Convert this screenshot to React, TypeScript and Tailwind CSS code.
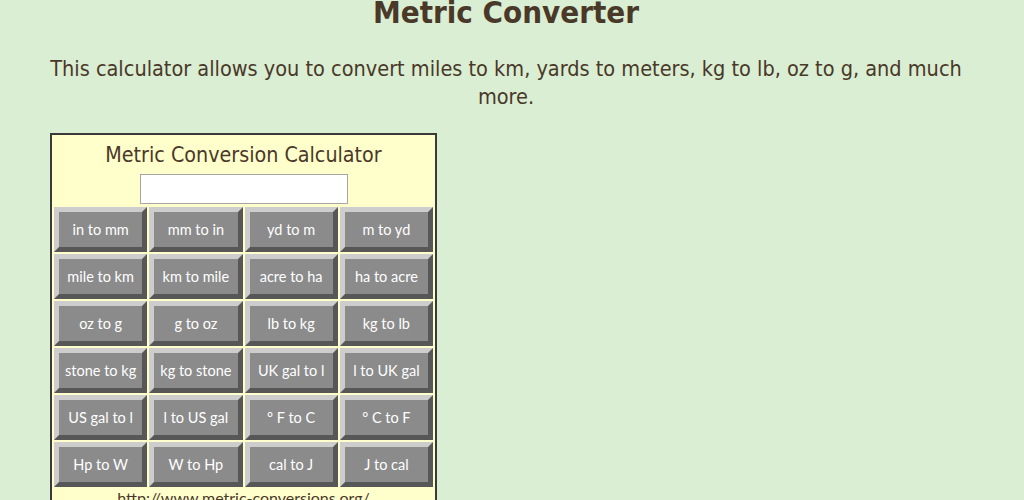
import React from "react";

const rows: string[][] = [
  ["in to mm", "mm to in", "yd to m", "m to yd"],
  ["mile to km", "km to mile", "acre to ha", "ha to acre"],
  ["oz to g", "g to oz", "lb to kg", "kg to lb"],
  ["stone to kg", "kg to stone", "UK gal to l", "l to UK gal"],
  ["US gal to l", "l to US gal", "° F to C", "° C to F"],
  ["Hp to W", "W to Hp", "cal to J", "J to cal"],
];

export default function App() {
  return (
    <div className="min-h-[500px] w-[1024px] overflow-hidden bg-[#d9eed3] text-[#4a3828] [font-family:'DejaVu_Sans',sans-serif] font-stretch-condensed">
      <div className="pr-[12px] mt-[-7px]">
        <h1 className="text-center text-[31px] leading-[38px] font-bold">Metric Converter</h1>
        <p className="mt-[24px] px-[40px] text-center text-[21.5px] leading-[28px]">
          This calculator allows you to convert miles to km, yards to meters, kg to lb, oz to g, and much more.
        </p>
      </div>
      <div className="ml-[50px] mt-[22px] w-[387px] border-2 border-[#3a3a3a] bg-[#ffffcc] pb-2">
        <div className="pt-[6px] text-center text-[21.3px] leading-[28px]">Metric Conversion Calculator</div>
        <div className="flex justify-center mt-[5px]">
          <input
            type="text"
            className="h-[30px] w-[208px] border border-[#a6a6a6] bg-white outline-none"
          />
        </div>
        <div className="mt-[3px] grid grid-cols-4 gap-[2px] px-[2px]">
          {rows.flat().map((label) => (
            <div
              key={label}
              className="flex h-[45px] items-center justify-center border-[5px] border-t-[#cdcdcd] border-l-[#cdcdcd] border-r-[#575757] border-b-[#575757] bg-[#8b8b8b] text-[14.5px] text-white [font-family:'Lato',sans-serif] font-stretch-normal"
            >
              {label}
            </div>
          ))}
        </div>
        <div className="mt-[1px] text-center text-[16px] leading-[20px] [font-family:'Lato',sans-serif] font-stretch-normal">
          http://www.metric-conversions.org/
        </div>
      </div>
    </div>
  );
}
